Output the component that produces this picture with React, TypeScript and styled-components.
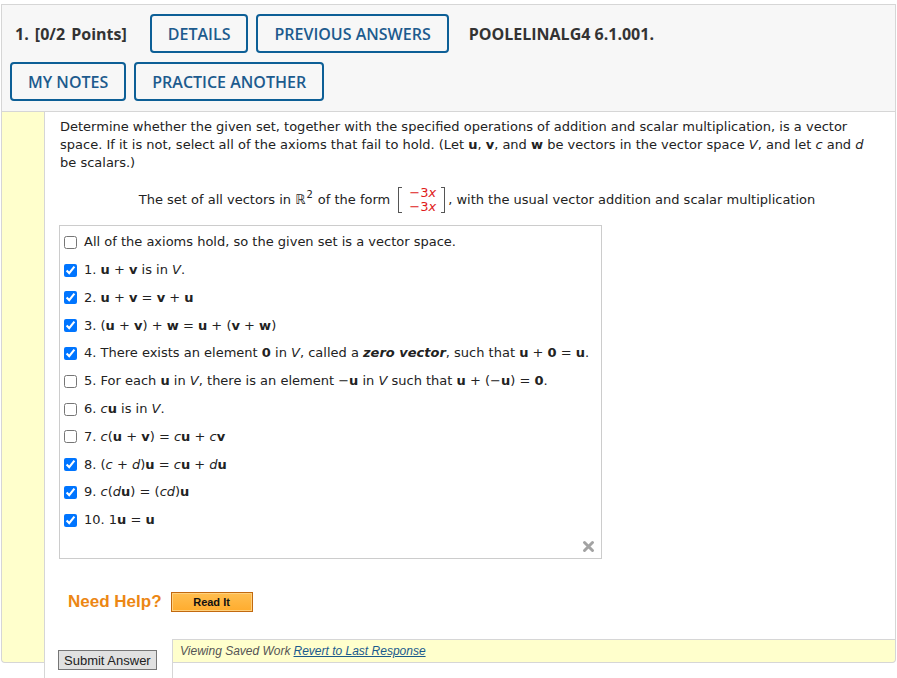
import React from "react";
import styled, { createGlobalStyle } from "styled-components";

const Global = createGlobalStyle`
  html, body {
    margin: 0;
    padding: 0;
    background: #fff;
  }
`;

const Page = styled.div`
  width: 896px;
  padding: 4px 0 0 1px;
  box-sizing: border-box;
`;

const Header = styled.div`
  display: flex;
  flex-direction: column;
  gap: 9px;
  padding: 9px 8px 10px;
  background: #f7f7f7;
  border: 1px solid #d6d6d6;
  font-family: "Open Sans", sans-serif;
`;

const HeaderRow = styled.div`
  display: flex;
  align-items: center;
  gap: 8px;
`;

const Title = styled.div`
  padding: 0 15px 0 5px;
  font-size: 16px;
  font-weight: 700;
  color: #333;
  word-spacing: 2px;
`;

const HeadButton = styled.button`
  height: 39px;
  padding: 0 16px;
  box-sizing: border-box;
  border: 2px solid #0d5f96;
  border-radius: 4px;
  background: transparent;
  color: #1d5b8e;
  font-family: "Open Sans", sans-serif;
  font-size: 16px;
  font-weight: 600;
`;

const Code = styled.div`
  margin-left: 12px;
  font-size: 16px;
  font-weight: 700;
  color: #333;
`;

const Body = styled.div`
  display: flex;
`;

const Rail = styled.div`
  width: 43px;
  display: flex;
  flex-direction: column;
`;

const RailFill = styled.div`
  flex: 1;
  background: #ffffcc;
  border-left: 1px solid #d6d6d6;
  border-bottom: 1px solid #d6d6d6;
  border-bottom-left-radius: 4px;
`;

const RailTail = styled.div`
  height: 16px;
`;

const Panel = styled.div`
  flex: 1;
  background: #fff;
  border-left: 1px solid #d6d6d6;
  font-family: "DejaVu Sans", Verdana, sans-serif;
  font-size: 13px;
  color: #222;
`;

const Content = styled.div`
  padding: 6px 14px 27px;
  border-right: 1px solid #d6d6d6;
`;

const Para = styled.p`
  margin: 0;
  padding-left: 1px;
  line-height: 17.8px;
`;

const Equation = styled.div`
  margin: 14px 0 0 14px;
  height: 30px;
  line-height: 30px;
  text-align: center;
`;

const Matrix = styled.span`
  display: inline-flex;
  vertical-align: middle;
  align-items: stretch;
  margin: -2px 3px 0 8px;
  height: 26px;
  line-height: normal;
`;

const Bracket = styled.span<{ $side: "left" | "right" }>`
  width: 3px;
  border: 1px solid #555;
  ${(p) => (p.$side === "left" ? "border-right: none;" : "border-left: none;")}
`;

const Entries = styled.span`
  display: flex;
  flex-direction: column;
  justify-content: center;
  padding: 0 5px 0 7px;
  color: #e01b1b;
  font-size: 13px;
  line-height: 14px;
`;

const Sup = styled.sup`
  font-size: 10px;
  line-height: 0;
  vertical-align: 6px;
  margin: 0 5px 0 1px;
`;

const Choices = styled.div`
  width: 543px;
  margin-top: 10px;
  box-sizing: border-box;
  border: 1px solid #cccccc;
  padding-top: 2px;
`;

const Choice = styled.label`
  display: flex;
  align-items: center;
  height: 27.8px;
  line-height: 18px;

  input {
    width: 13px;
    height: 13px;
    margin: 0 4px;
  }
`;

const ChoiceText = styled.span`
  margin-left: 3px;
`;

const CloseRow = styled.div`
  display: flex;
  justify-content: flex-end;
  align-items: center;
  height: 24px;
  padding-right: 6px;
`;

const HelpRow = styled.div`
  display: flex;
  align-items: center;
  gap: 9px;
  margin-top: 33px;
  padding-left: 9px;
`;

const HelpLabel = styled.span`
  font-family: "Liberation Sans", Arial, sans-serif;
  font-size: 17px;
  font-weight: 700;
  color: #ec8714;
`;

const ReadIt = styled.button`
  width: 82px;
  height: 20px;
  padding: 0;
  border: 1px solid #c2690f;
  background: linear-gradient(#ffbe50, #ffac2e);
  box-shadow: inset 0 0 0 1px #ffd17e;
  font-family: "Liberation Sans", Arial, sans-serif;
  font-size: 11px;
  font-weight: 700;
  color: #111;
`;

const Footer = styled.div`
  display: flex;
`;

const SubmitCell = styled.div`
  width: 127px;
  box-sizing: border-box;
  padding: 11px 0 8px 13px;
`;

const SubmitButton = styled.button`
  height: 20px;
  padding: 0 5px;
  border: 1px solid #767676;
  background: #e1e1e1;
  font-family: "Liberation Sans", Arial, sans-serif;
  font-size: 13px;
  color: #222;
`;

const SavedArea = styled.div`
  flex: 1;
  border-left: 1px solid #d6d6d6;
  padding-bottom: 16px;
`;

const SavedBar = styled.div`
  height: 22px;
  display: flex;
  align-items: center;
  padding-left: 7px;
  background: #ffffcc;
  border: 1px solid #d6d6d6;
  border-left: none;
  border-bottom-right-radius: 4px;
  font-family: "Liberation Sans", Arial, sans-serif;
  font-size: 12px;
  font-style: italic;
  color: #555;
`;

const Revert = styled.a`
  margin-left: 3px;
  color: #1a5a8c;
  text-decoration: underline;
`;

const CloseIcon = () => (
  <svg width="13" height="13" viewBox="0 0 13 13">
    <path d="M2.5 2.5 L10.5 10.5 M10.5 2.5 L2.5 10.5" stroke="#a3a3a3" strokeWidth="3" strokeLinecap="round" />
  </svg>
);

const B = styled.b`
  font-weight: 700;
`;

const choices: { checked: boolean; text: React.ReactNode }[] = [
  { checked: false, text: "All of the axioms hold, so the given set is a vector space." },
  { checked: true, text: <>1. <B>u</B> + <B>v</B> is in <i>V</i>.</> },
  { checked: true, text: <>2. <B>u</B> + <B>v</B> = <B>v</B> + <B>u</B></> },
  { checked: true, text: <>3. (<B>u</B> + <B>v</B>) + <B>w</B> = <B>u</B> + (<B>v</B> + <B>w</B>)</> },
  {
    checked: true,
    text: (
      <>
        4. There exists an element <B>0</B> in <i>V</i>, called a <B><i>zero vector</i></B>, such that{" "}
        <B>u</B> + <B>0</B> = <B>u</B>.
      </>
    ),
  },
  {
    checked: false,
    text: (
      <>
        5. For each <B>u</B> in <i>V</i>, there is an element −<B>u</B> in <i>V</i> such that <B>u</B> + (−
        <B>u</B>) = <B>0</B>.
      </>
    ),
  },
  { checked: false, text: <>6. <i>c</i><B>u</B> is in <i>V</i>.</> },
  { checked: false, text: <>7. <i>c</i>(<B>u</B> + <B>v</B>) = <i>c</i><B>u</B> + <i>c</i><B>v</B></> },
  { checked: true, text: <>8. (<i>c</i> + <i>d</i>)<B>u</B> = <i>c</i><B>u</B> + <i>d</i><B>u</B></> },
  { checked: true, text: <>9. <i>c</i>(<i>d</i><B>u</B>) = (<i>cd</i>)<B>u</B></> },
  { checked: true, text: <>10. 1<B>u</B> = <B>u</B></> },
];

const App = () => {
  return (
    <Page>
      <Global />
      <Header>
        <HeaderRow>
          <Title>1. [0/2 Points]</Title>
          <HeadButton>DETAILS</HeadButton>
          <HeadButton>PREVIOUS ANSWERS</HeadButton>
          <Code>POOLELINALG4 6.1.001.</Code>
        </HeaderRow>
        <HeaderRow>
          <HeadButton>MY NOTES</HeadButton>
          <HeadButton>PRACTICE ANOTHER</HeadButton>
        </HeaderRow>
      </Header>
      <Body>
        <Rail>
          <RailFill />
          <RailTail />
        </Rail>
        <Panel>
          <Content>
            <Para>
              Determine whether the given set, together with the specified operations of addition and scalar
              multiplication, is a vector space. If it is not, select all of the axioms that fail to hold. (Let{" "}
              <B>u</B>, <B>v</B>, and <B>w</B> be vectors in the vector space <i>V</i>, and let <i>c</i> and{" "}
              <i>d</i> be scalars.)
            </Para>
            <Equation>
              The set of all vectors in ℝ<Sup>2</Sup>of the form
              <Matrix>
                <Bracket $side="left" />
                <Entries>
                  <span>−3<i>x</i></span>
                  <span>−3<i>x</i></span>
                </Entries>
                <Bracket $side="right" />
              </Matrix>
              , with the usual vector addition and scalar multiplication
            </Equation>
            <Choices>
              {choices.map((c, i) => (
                <Choice key={i}>
                  <input type="checkbox" defaultChecked={c.checked} />
                  <ChoiceText>{c.text}</ChoiceText>
                </Choice>
              ))}
              <CloseRow>
                <CloseIcon />
              </CloseRow>
            </Choices>
            <HelpRow>
              <HelpLabel>Need Help?</HelpLabel>
              <ReadIt>Read It</ReadIt>
            </HelpRow>
          </Content>
          <Footer>
            <SubmitCell>
              <SubmitButton>Submit Answer</SubmitButton>
            </SubmitCell>
            <SavedArea>
              <SavedBar>
                Viewing Saved Work<Revert href="#">Revert to Last Response</Revert>
              </SavedBar>
            </SavedArea>
          </Footer>
        </Panel>
      </Body>
    </Page>
  );
};

export default App;
